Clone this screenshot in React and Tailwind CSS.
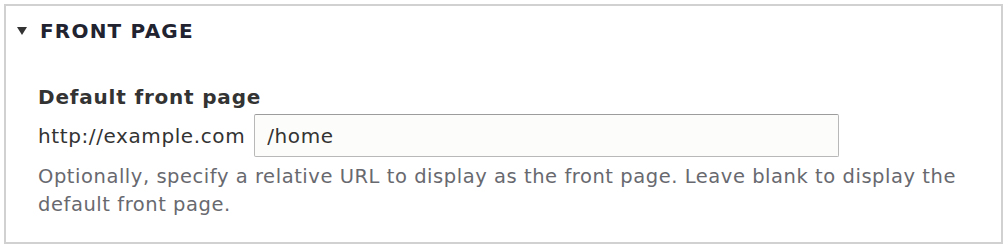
export default function App() {
  return (
    <div className="h-[248px] w-[1007px] bg-white p-[4px] font-['DejaVu_Sans',sans-serif]">
      <details open className="h-[240px] w-[999px] border-2 border-[#d1d1d1]">
        <summary className="flex list-none items-center pl-[11px] pt-[13px] text-[20px] font-bold uppercase leading-[24px] tracking-[1.2px] text-[#222330] [&::-webkit-details-marker]:hidden">
          <svg width="10" height="8" viewBox="0 0 10 8" className="mr-[13px]" aria-hidden="true">
            <path d="M0 0 H10 L5 8 Z" fill="#333" />
          </svg>
          Front page
        </summary>
        <div className="pl-[32px] pt-[41px]">
          <label htmlFor="front" className="block text-[20px] font-bold leading-[26px] tracking-[0.8px] text-[#333]">
            Default front page
          </label>
          <div className="mt-[4px] flex items-center gap-[9px]">
            <span className="text-[20px] leading-[24px] tracking-[0.6px] text-[#333]">http://example.com</span>
            <input
              id="front"
              defaultValue="/home"
              className="h-[43px] w-[585px] rounded-[2px] border border-[#b8b8b8] border-t-[#9c9c9c] bg-[#fcfcfa] px-[12px] text-[20px] tracking-[0.6px] text-[#333] outline-none"
            />
          </div>
          <p className="mt-[6px] w-[940px] text-[19.5px] leading-[28px] tracking-[0.55px] text-[#68696f]">
            Optionally, specify a relative URL to display as the front page. Leave blank to display the default front page.
          </p>
        </div>
      </details>
    </div>
  )
}
